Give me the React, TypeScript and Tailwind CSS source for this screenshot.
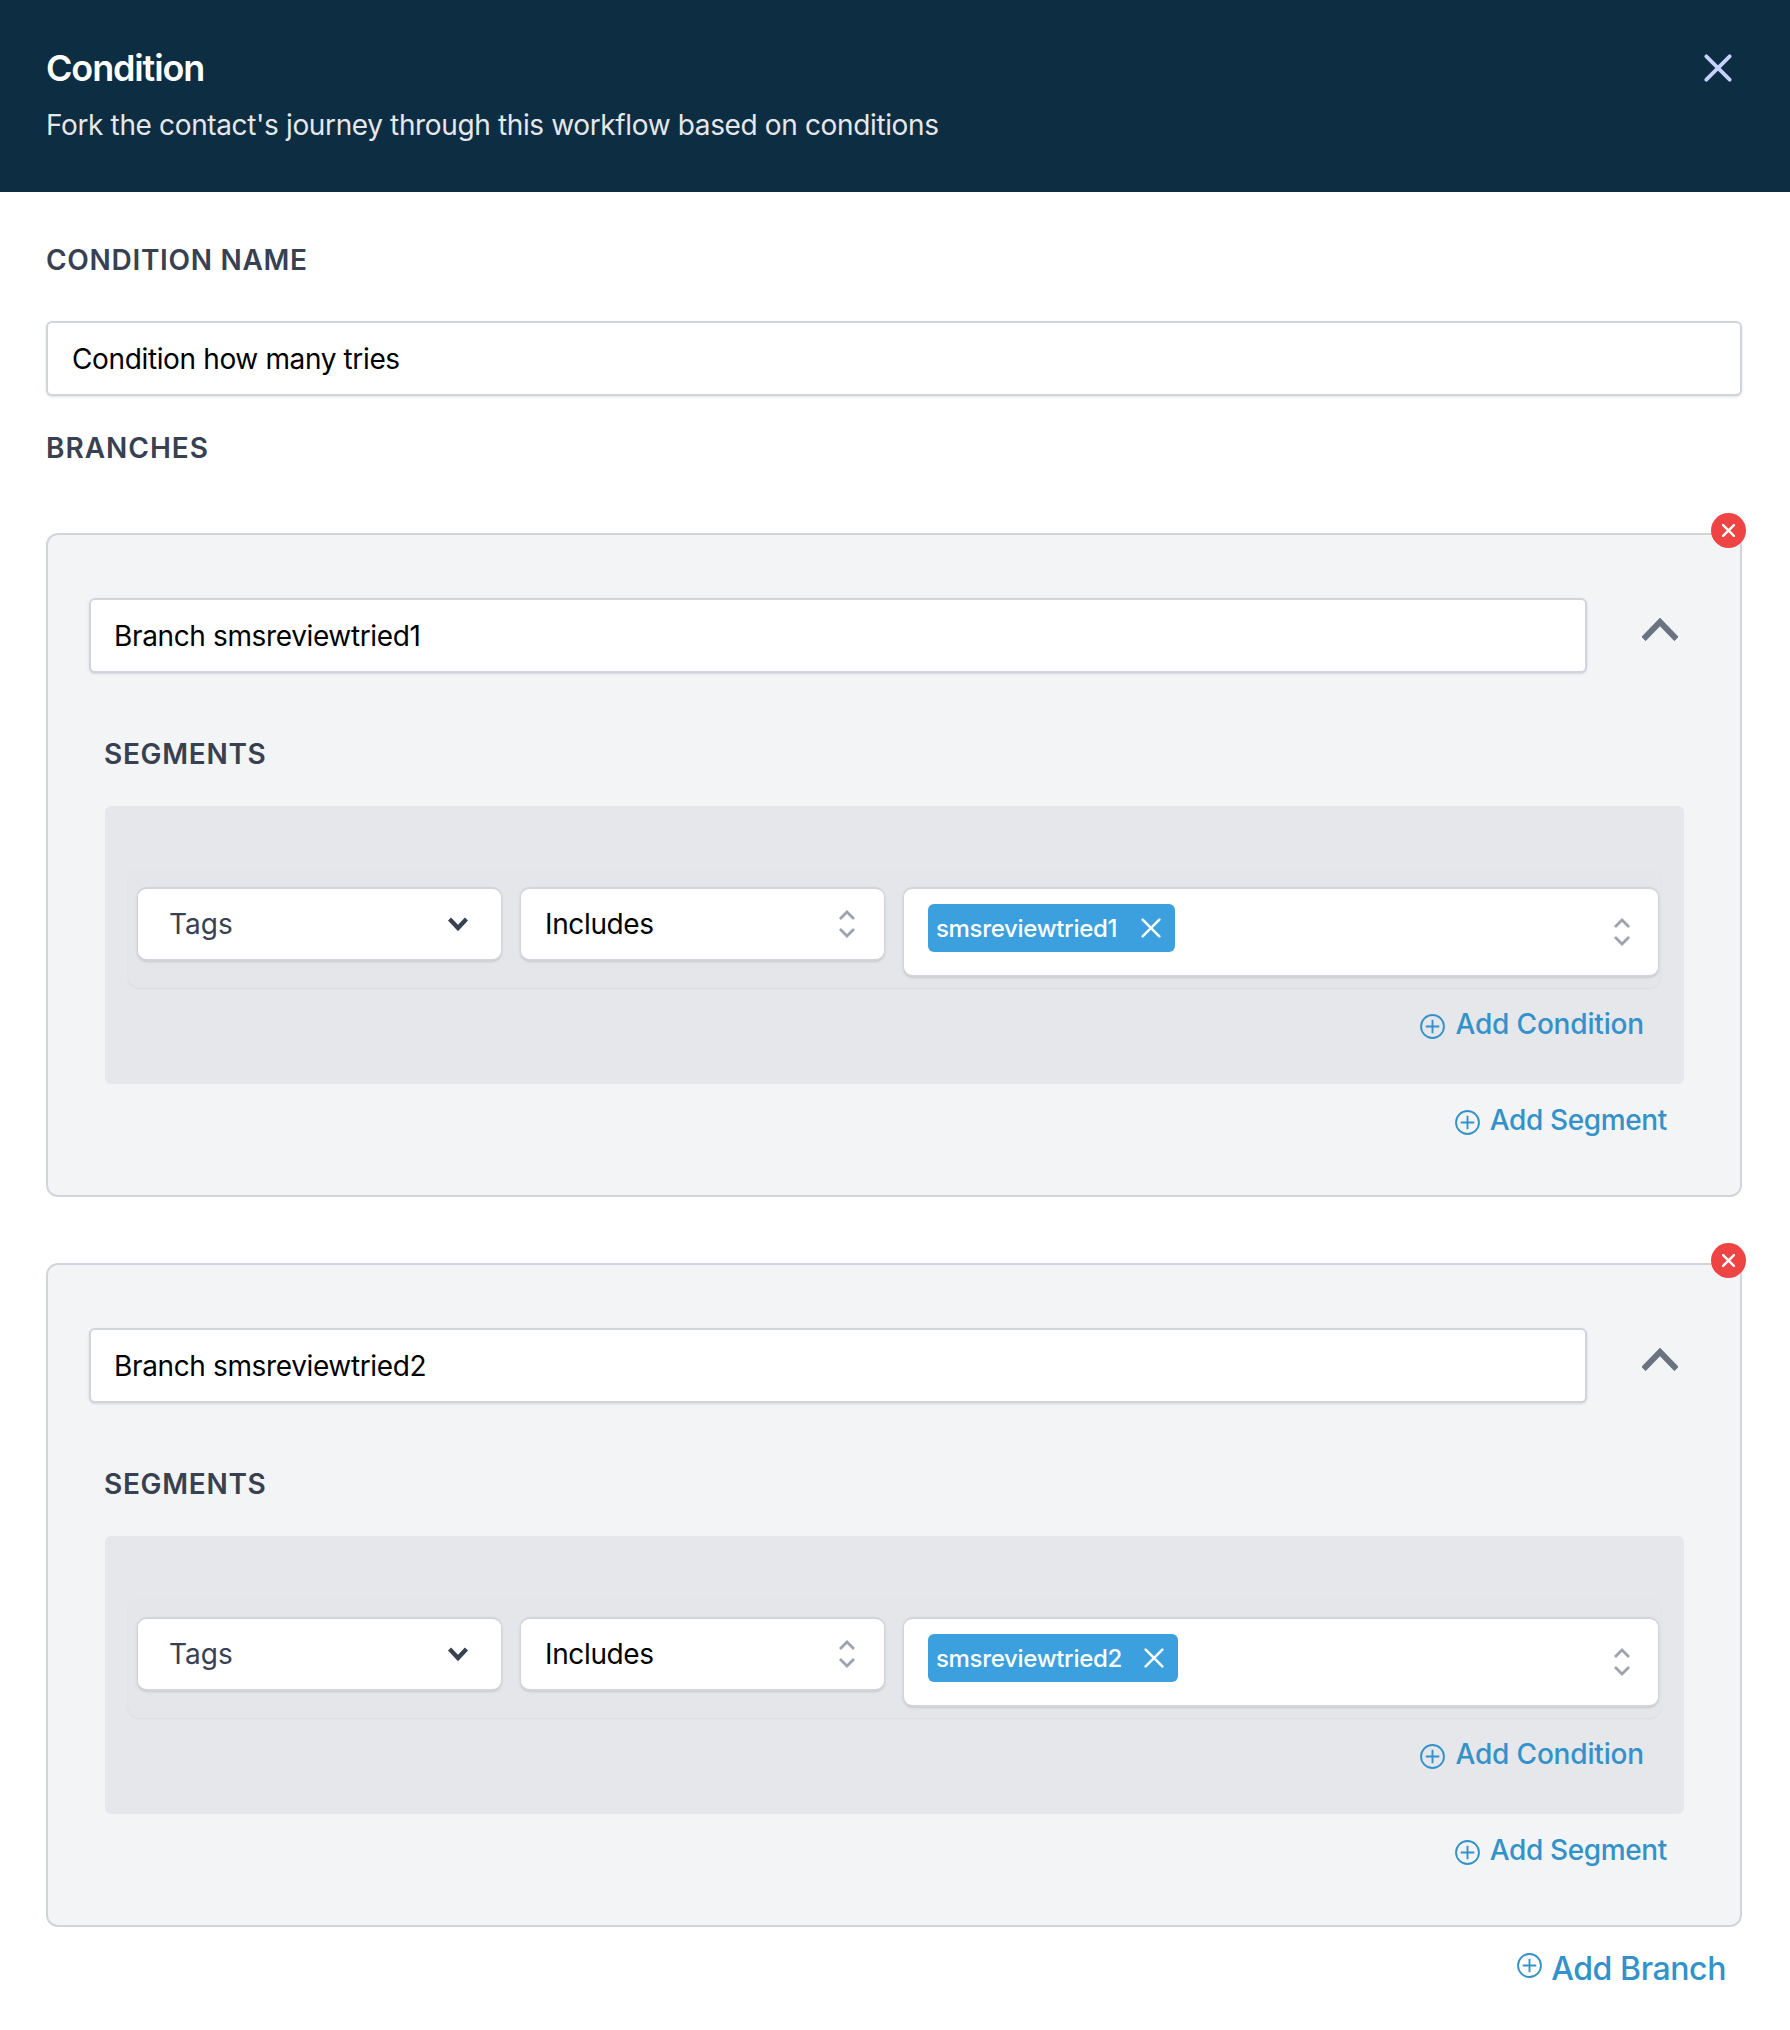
import React from "react";

const font = { fontFamily: "Inter, 'Liberation Sans', sans-serif" };

function XIcon({ className, stroke = 3 }: { className: string; stroke?: number }) {
  return (
    <svg viewBox="0 0 24 24" fill="none" stroke="currentColor" strokeWidth={stroke} strokeLinecap="round" className={className}>
      <path d="M2 2 L22 22 M22 2 L2 22" />
    </svg>
  );
}

function Updown() {
  return (
    <svg viewBox="0 0 16 30" fill="none" stroke="#9ca3af" strokeWidth="2.8" className="w-[16px] h-[30px] shrink-0">
      <path d="M1 10 L8 3 L15 10" />
      <path d="M1 20 L8 27 L15 20" />
    </svg>
  );
}

function PlusCircle({ className }: { className: string }) {
  return (
    <svg viewBox="0 0 24 24" fill="none" stroke="currentColor" strokeWidth="1.8" className={className}>
      <circle cx="12" cy="12" r="11" />
      <path d="M12 5.5 V18.5 M5.5 12 H18.5" />
    </svg>
  );
}

function AddLink({ label, cls = "" }: { label: string; cls?: string }) {
  return (
    <div className={`flex items-center justify-end gap-[10px] text-[#3392c9] text-[28px] font-medium leading-[36px] ${cls}`}>
      <PlusCircle className="w-[25px] h-[25px] mt-[4px] shrink-0" />
      <span>{label}</span>
    </div>
  );
}

function SectionLabel({ children, cls = "" }: { children: React.ReactNode; cls?: string }) {
  return <div className={`text-[#374151] text-[28px] font-semibold tracking-[0.025em] leading-[40px] uppercase ${cls}`}>{children}</div>;
}

function Branch({ name, tag, chipW, cls = "" }: { name: string; tag: string; chipW: string; cls?: string }) {
  return (
    <div className={`relative h-[664px] rounded-[12px] border-2 border-[#d1d5db] bg-[#f3f4f6] pt-[63px] pl-[41px] pr-[56px] ${cls}`}>
      <div className="absolute -top-[22px] -right-[6px] w-[35px] h-[35px] rounded-full bg-[#ef4444] flex items-center justify-center text-white">
        <XIcon className="w-[13px] h-[13px]" stroke={4.5} />
      </div>
      <div className="flex items-start">
        <div className="w-[1498px] h-[75px] shrink-0 rounded-[6px] border-2 border-[#d1d5db] bg-white shadow-sm pl-[23px] flex items-center text-[28px] tracking-[-0.013em] text-black">
          {name}
        </div>
        <svg viewBox="0 0 36 23" fill="none" stroke="#6b7280" strokeWidth="6" className="ml-[55px] mt-[20px] w-[36px] h-[23px] shrink-0">
          <path d="M1.5 21 L18 4 L34.5 21" />
        </svg>
      </div>
      <div className="pl-[15px] mt-[61px]">
        <SectionLabel>Segments</SectionLabel>
      </div>
      <div className="ml-[16px] mt-[32px] w-[1579px] h-[278px] rounded-[6px] bg-[#e5e7eb] pt-[61px] pl-[23px]">
        <div className="w-[1533px] h-[121px] rounded-[12px] bg-[#e4e6e9] shadow-[0_1px_2px_rgba(0,0,0,0.05)] pt-[20px] pl-[9px] flex items-start">
          <div className="w-[365px] h-[74px] rounded-[10px] border border-t-2 border-b-2 border-[#d1d5db] bg-white shadow-sm flex items-center justify-between pl-[31px] pr-[33px] text-[28px] text-[#374151]">
            <span>Tags</span>
            <svg viewBox="0 0 20 14" fill="none" stroke="#374151" strokeWidth="4.4" className="w-[20px] h-[14px]">
              <path d="M1.5 2 L10 11 L18.5 2" />
            </svg>
          </div>
          <div className="ml-[18px] w-[365px] h-[74px] rounded-[10px] border border-t-2 border-b-2 border-[#d1d5db] bg-white shadow-sm flex items-center justify-between pl-[24px] pr-[29px] text-[28px] tracking-[-0.013em] text-black">
            <span>Includes</span>
            <Updown />
          </div>
          <div className="ml-[18px] w-[756px] h-[90px] rounded-[10px] border border-t-2 border-b-2 border-[#d1d5db] bg-white shadow-sm flex items-start justify-between pl-[24px] pr-[28px] pt-[15px]">
            <div className={`h-[48px] ${chipW} rounded-[6px] bg-[#3ba0dd] flex items-center justify-between pl-[8px] pr-[14px] text-white text-[24px] font-medium tracking-[-0.013em]`}>
              <span className="pt-[2px]">{tag}</span>
              <XIcon className="w-[20px] h-[20px]" stroke={3} />
            </div>
            <div className="mt-[13px]"><Updown /></div>
          </div>
        </div>
        <AddLink label="Add Condition" cls="mt-[18px] pr-[40px] tracking-[-0.006em]" />
      </div>
      <AddLink label="Add Segment" cls="mt-[18px] pr-[17px] tracking-[-0.013em]" />
    </div>
  );
}

export default function App() {
  return (
    <div className="w-[1790px] h-[2030px] bg-white overflow-hidden" style={font}>
      <header className="h-[192px] bg-[#0c2d42] pl-[46px] pr-[58px] flex justify-between">
        <div>
          <h1 className="mt-[44px] text-white text-[36px] font-semibold leading-[48px] tracking-[-0.032em]">Condition</h1>
          <p className="mt-[13px] text-[#e5e7eb] text-[28px] leading-[40px] tracking-[-0.013em]">Fork the contact's journey through this workflow based on conditions</p>
        </div>
        <XIcon className="mt-[54px] w-[28px] h-[28px] text-[#c7d2fe]" stroke={3.2} />
      </header>
      <main className="pl-[46px] pr-[48px]">
        <SectionLabel cls="pt-[48px] box-content">Condition Name</SectionLabel>
        <div className="mt-[41px] h-[75px] rounded-[6px] border-2 border-[#d1d5db] bg-white shadow-sm pl-[24px] flex items-center text-[28px] tracking-[-0.013em] text-black">
          Condition how many tries
        </div>
        <SectionLabel cls="mt-[32px] tracking-[0.035em]">Branches</SectionLabel>
        <Branch cls="mt-[65px]" name="Branch smsreviewtried1" tag="smsreviewtried1" chipW="w-[247px]" />
        <Branch cls="mt-[66px]" name="Branch smsreviewtried2" tag="smsreviewtried2" chipW="w-[250px]" />
        <div className="flex items-center justify-end gap-[9px] mt-[20px] pr-[16px] text-[#3392c9] text-[32px] font-medium leading-[44px] tracking-[-0.013em]">
          <PlusCircle className="w-[25px] h-[25px] -mt-[7px]" />
          <span>Add Branch</span>
        </div>
      </main>
    </div>
  );
}
